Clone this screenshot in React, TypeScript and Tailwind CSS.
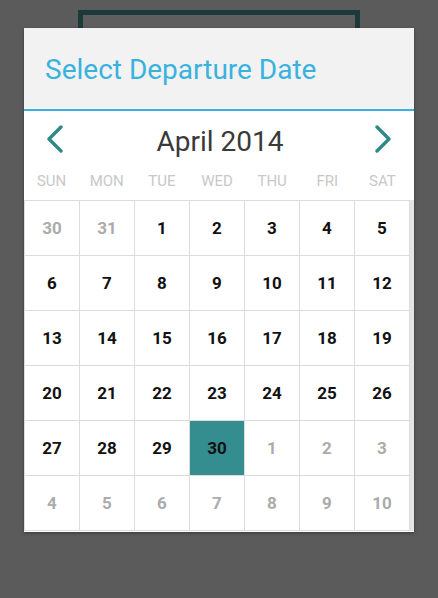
import React from "react";

const prev = [30, 31];
const cur = Array.from({ length: 30 }, (_, i) => i + 1);
const next = Array.from({ length: 10 }, (_, i) => i + 1);

type Cell = { d: number; inMonth: boolean; sel?: boolean };
const cells: Cell[] = [
  ...prev.map((d) => ({ d, inMonth: false })),
  ...cur.map((d) => ({ d, inMonth: true, sel: d === 30 })),
  ...next.map((d) => ({ d, inMonth: false })),
];

const days = ["SUN", "MON", "TUE", "WED", "THU", "FRI", "SAT"];

function Chevron({ dir }: { dir: "left" | "right" }) {
  return (
    <svg width="18" height="28" viewBox="0 0 18 28" fill="none">
      <path
        d={dir === "left" ? "M15 2 L3 14 L15 26" : "M3 2 L15 14 L3 26"}
        stroke="#2f8a87"
        strokeWidth="3.4"
        strokeLinecap="round"
        strokeLinejoin="round"
      />
    </svg>
  );
}

export default function App() {
  return (
    <div
      className="relative w-[438px] h-[598px] bg-[#5b5b5b] overflow-hidden"
      style={{ fontFamily: "Roboto, 'Noto Sans', sans-serif" }}
    >
      <div className="absolute left-[78px] top-[10px] w-[282px] h-[100px] border-[5px] border-[#1c3a3a] bg-[#5e5e5e]" />
      <div className="absolute left-[24px] top-[28px] w-[390px] h-[504px] bg-white flex flex-col shadow-[0_1px_3px_rgba(0,0,0,0.4)]">
        <div className="h-[81px] bg-[#f2f2f2] flex items-center pl-[21px] pt-[2px]">
          <span className="text-[28px] text-[#3ab2de] leading-none">Select Departure Date</span>
        </div>
        <div className="h-[2px] bg-[#3ab2de]" />
        <div className="h-[56px] flex items-center justify-between px-[22px]">
          <Chevron dir="left" />
          <span className="text-[28px] text-[#3a3a3a] leading-none pl-[2px] pt-[5px]">April 2014</span>
          <Chevron dir="right" />
        </div>
        <div className="h-[33px] grid grid-cols-7 w-[386px] items-start pt-[7px]">
          {days.map((d) => (
            <div key={d} className="text-center text-[15px] text-[#c8c8c8] leading-none">
              {d}
            </div>
          ))}
        </div>
        <div className="flex">
          <div className="w-[386px] grid grid-cols-7 gap-px bg-[#dcdcdc] border border-[#dcdcdc]">
            {cells.map((c, i) => (
              <div
                key={i}
                className={`h-[54px] flex items-center justify-center text-[17px] font-bold pt-[2px] ${
                  c.sel ? "bg-[#348d8e] text-[#111]" : "bg-white"
                } ${c.inMonth ? "text-[#111]" : "text-[#ababab]"}`}
              >
                {c.d}
              </div>
            ))}
          </div>
          <div className="w-[4px] bg-[#e4e4e4]" />
        </div>
      </div>
    </div>
  );
}
